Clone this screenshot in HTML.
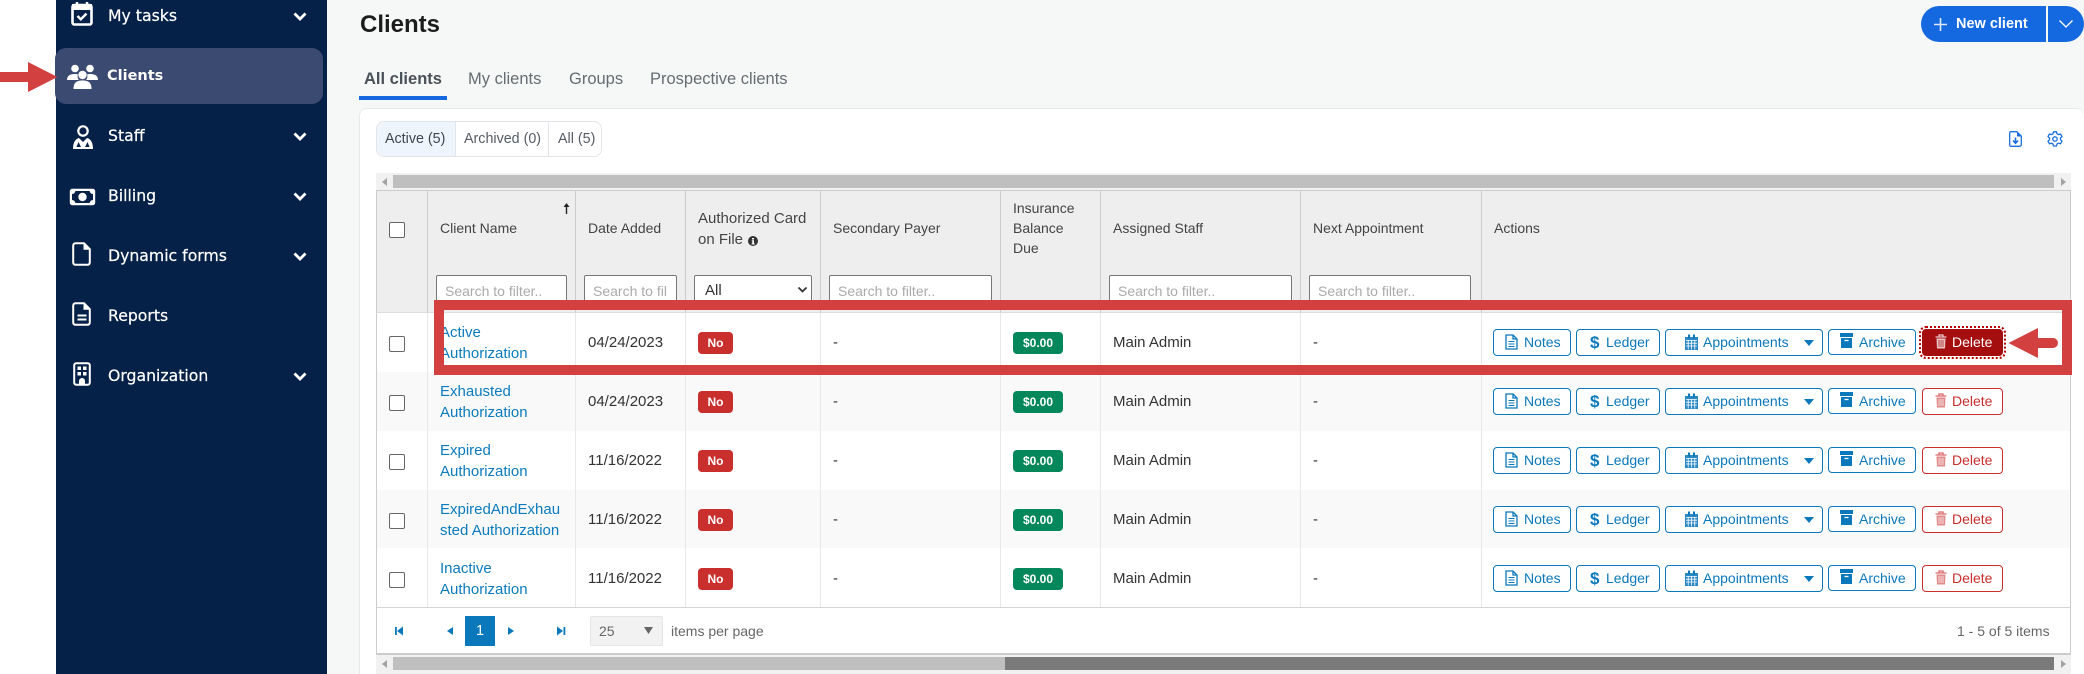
<!DOCTYPE html>
<html><head><meta charset="utf-8">
<style>
html,body{margin:0;padding:0}
*{box-sizing:border-box}
body{width:2084px;height:674px;position:relative;overflow:hidden;background:#fff;font-family:"Liberation Sans",Arial,sans-serif;color:#333}
.a{position:absolute}
.t{position:absolute;white-space:nowrap}
.nav{position:absolute;left:108px;color:#fff;font-family:"DejaVu Sans",sans-serif;font-size:15.7px;line-height:20px;white-space:nowrap;-webkit-text-stroke:.2px #fff}
svg{position:absolute;overflow:visible}
.cell{position:absolute;white-space:nowrap;font-size:15px;line-height:21px;color:#333}
.link{color:#0b7bbd}
.th{position:absolute;font-size:14px;line-height:21px;color:#444;white-space:nowrap}
.inp{position:absolute;top:275px;height:30px;background:#fff;border:1px solid #777;border-radius:2px;font-size:14px;line-height:18px;color:#aaa;padding:6px 0 0 8px;overflow:hidden;white-space:nowrap}
.vl{position:absolute;width:1px}
.row{position:absolute;left:377px;width:1693px;height:59px}
.btn{position:absolute;top:16px;height:27px;border:1px solid #0a78bb;border-radius:4px;background:#fff;color:#0a78bb;font-size:14px;line-height:25px;white-space:nowrap}
.btn span{position:absolute;top:0}
.del{border-color:#c92f2c;color:#c92f2c}
.no{position:absolute;left:321px;top:19px;width:35px;height:22px;background:#c92f2c;border-radius:4px;color:#fff;font-size:12px;font-weight:bold;text-align:center;line-height:22px}
.bal{position:absolute;left:636px;top:19px;width:50px;height:22px;background:#04875a;border-radius:4px;color:#fff;font-size:12px;font-weight:bold;text-align:center;line-height:22px}
</style></head>
<body>
<svg width="0" height="0" style="position:absolute">
<defs>
<symbol id="chev" viewBox="0 0 14 9"><path d="M1.5 1.5L7 7l5.5-5.5" fill="none" stroke="#fff" stroke-width="2.8"/></symbol>
<symbol id="note" viewBox="0 0 13 16"><path d="M1 1h7l4 4v10H1z M8 1v4h4" fill="none" stroke="#0a78bb" stroke-width="1.3"/><path d="M3.5 7.5h6M3.5 10h6M3.5 12.5h6" stroke="#0a78bb" stroke-width="1.1"/></symbol>
<symbol id="cal" viewBox="0 0 13 16"><path d="M0 3h13v13H0z" fill="#2a88c4"/><path d="M3 0.5h2v4H3zM8 .5h2v4H8z" fill="#0a78bb"/><path d="M1 6.5h11M1 9.2h11M1 12h11M3.2 6v9.5M6.5 6v9.5M9.8 6v9.5" stroke="#fff" stroke-width=".8"/></symbol>
<symbol id="box" viewBox="0 0 13 15"><path d="M0 0h13v4H0zM1 5h11v10H1z" fill="#0a78bb"/><path d="M4.5 7.5h4" stroke="#fff" stroke-width="1.3"/></symbol>
<symbol id="trash" viewBox="0 0 12 15"><path d="M.5 3h11M4 3V1h4v2" fill="none" stroke="#d9686a" stroke-width="1.3"/><path d="M1.5 4.5h9L10 14.5H2z" fill="#e08a8a"/><path d="M4 6v7M6 6v7M8 6v7" stroke="#fff" stroke-width=".7"/></symbol>
<symbol id="trashw" viewBox="0 0 12 15"><path d="M.5 3h11M4 3V1h4v2" fill="none" stroke="#e9c4c4" stroke-width="1.3"/><path d="M1.5 4.5h9L10 14.5H2z" fill="#e9c4c4"/><path d="M4 6v7M6 6v7M8 6v7" stroke="#a50e0e" stroke-width=".7"/></symbol>
<symbol id="caret" viewBox="0 0 10 6"><path d="M0 0h10L5 6z" fill="#0a78bb"/></symbol>
</defs>
</svg>

<!-- main bg -->
<div class="a" style="left:327px;top:0;width:1757px;height:674px;background:#f6f8f8"></div>
<!-- sidebar -->
<div class="a" style="left:56px;top:0;width:271px;height:674px;background:#062147"></div>
<div class="a" style="left:55px;top:48px;width:268px;height:56px;background:#3a4a70;border-radius:11px"></div>

<!-- sidebar icons -->
<svg style="left:71px;top:0" width="22" height="27" viewBox="0 0 22 27"><rect x="1.5" y="5" width="19" height="19.5" rx="2" fill="none" stroke="#fff" stroke-width="2.6"/><rect x="1" y="4" width="20" height="6" fill="#fff"/><path d="M6 2v4M16 2v4" stroke="#fff" stroke-width="2.4"/><path d="M6.5 16l3.3 3.3 5.7-5.7" fill="none" stroke="#fff" stroke-width="2.4"/></svg>
<svg style="left:67px;top:64px" width="31" height="26" viewBox="0 0 31 26"><g fill="#fff"><circle cx="8" cy="4.5" r="3.8"/><circle cx="23" cy="4.5" r="3.8"/><circle cx="15.5" cy="11" r="4.2"/><path d="M0 16c0-5 4-6 8-6 1 0 2 .1 3 .5-1 2.500 0 4.500 1 5.500z"/><path d="M31 16c0-5-4-6-8-6-1 0-2 .1-3 .5 1 2.500 0 4.500-1 5.500z"/><path d="M6.500 25c0-5 1.500-8.500 9-8.500s9 3.500 9 8.500z"/></g></svg>
<svg style="left:72px;top:125px" width="22" height="25" viewBox="0 0 22 25"><circle cx="11" cy="6" r="4.700" fill="none" stroke="#fff" stroke-width="2.200"/><path d="M1 24c0-6 2-10 6-11l4 4 4-4c4 1 6 5 6 11z" fill="#fff"/><path d="M4.500 22l2-5 2.500 5zM17.500 22l-2-5-2.500 5z" fill="#062147"/></svg>
<svg style="left:69px;top:188px" width="27" height="18" viewBox="0 0 27 18"><rect x=".8" y=".8" width="25.400" height="16.400" rx="2.500" fill="#fff"/><path d="M3 6q2.500 0 3.500-3h14q1 3 3.500 3v6q-2.500 0-3.500 3h-14Q5.500 12 3 12z" fill="#062147"/><circle cx="13.500" cy="9" r="4.200" fill="#fff"/></svg>
<svg style="left:73px;top:242px" width="18" height="24" viewBox="0 0 18 24"><path d="M2.500 1.200h8.500l5.800 6v13.300a2.300 2.300 0 0 1-2.300 2.300h-12a2.300 2.300 0 0 1-2.300-2.300V3.500a2.300 2.300 0 0 1 2.300-2.300z" fill="none" stroke="#fff" stroke-width="2"/><path d="M10.500 1l6.500 6.800h-6.500z" fill="#fff"/></svg>
<svg style="left:73px;top:302px" width="18" height="24" viewBox="0 0 18 24"><path d="M2.500 1.200h8.500l5.800 6v13.300a2.300 2.300 0 0 1-2.300 2.300h-12a2.300 2.300 0 0 1-2.300-2.300V3.500a2.300 2.300 0 0 1 2.300-2.300z" fill="none" stroke="#fff" stroke-width="2"/><path d="M10.500 1l6.500 6.800h-6.500z" fill="#fff"/><path d="M4.500 13.500h9M4.500 17.500h9" stroke="#fff" stroke-width="2"/></svg>
<svg style="left:73px;top:362px" width="18" height="24" viewBox="0 0 18 24"><rect x="1.200" y="1.200" width="15.600" height="21.600" rx="2" fill="none" stroke="#fff" stroke-width="2"/><path d="M4.500 4.500h3.500v3.500H4.500zM10 4.500h3.500v3.500H10zM4.500 10h3.500v3.500H4.500zM10 10h3.500v3.500H10z" fill="#fff"/><path d="M6 23v-4a3 3 0 0 1 6 0v4z" fill="#fff"/></svg>

<div class="nav" style="top:6px">My tasks</div>
<div class="nav" style="top:66px;font-weight:bold;font-size:14.500px;left:107px;-webkit-text-stroke:0">Clients</div>
<div class="nav" style="top:126px">Staff</div>
<div class="nav" style="top:186px">Billing</div>
<div class="nav" style="top:246px">Dynamic forms</div>
<div class="nav" style="top:306px">Reports</div>
<div class="nav" style="top:366px">Organization</div>

<svg style="left:293px;top:12px" width="14" height="9"><use href="#chev"/></svg>
<svg style="left:293px;top:132px" width="14" height="9"><use href="#chev"/></svg>
<svg style="left:293px;top:192px" width="14" height="9"><use href="#chev"/></svg>
<svg style="left:293px;top:252px" width="14" height="9"><use href="#chev"/></svg>
<svg style="left:293px;top:372px" width="14" height="9"><use href="#chev"/></svg>

<!-- heading -->
<div class="t" style="left:360px;top:11px;font-size:24px;line-height:28px;font-weight:bold;color:#1c1c1c">Clients</div>
<div class="a" style="left:1921px;top:6px;width:125px;height:36px;background:#1469e0;border-radius:18px 0 0 18px"></div>
<div class="a" style="left:2048px;top:6px;width:36px;height:36px;background:#1469e0;border-radius:0 18px 18px 0"></div>
<svg style="left:1934px;top:18px" width="13" height="13"><path d="M6.500 0v13M0 6.500h13" stroke="#dbe8fb" stroke-width="1.600"/></svg>
<div class="t" style="left:1956px;top:14px;font-size:14.500px;line-height:20px;font-weight:bold;color:#fff">New client</div>
<svg style="left:2059px;top:20px" width="14" height="8"><path d="M.5.500L7 7l6.500-6.500" fill="none" stroke="#fff" stroke-width="1.300"/></svg>

<!-- tabs -->
<div class="t" style="left:364px;top:69px;font-size:16.500px;line-height:20px;font-weight:bold;color:#4a5058">All clients</div>
<div class="t" style="left:468px;top:69px;font-size:16.500px;line-height:20px;color:#666c72">My clients</div>
<div class="t" style="left:569px;top:69px;font-size:16.500px;line-height:20px;color:#666c72">Groups</div>
<div class="t" style="left:650px;top:69px;font-size:16.500px;line-height:20px;color:#666c72">Prospective clients</div>
<div class="a" style="left:359px;top:96px;width:88px;height:4px;background:#1469e0"></div>

<!-- card -->
<div class="a" style="left:359px;top:108px;width:1725px;height:566px;background:#fff;border:1px solid #e8eaea;border-bottom:0;border-right:0;border-radius:8px 8px 0 0"></div>

<!-- segment -->
<div class="a" style="left:376px;top:121px;width:226px;height:36px;border:1px solid #e3e5e8;border-radius:8px;background:#fff;overflow:hidden">
<div class="a" style="left:0;top:0;width:79px;height:34px;background:#eff5fd;border-right:1px solid #e3e5e8"></div>
<div class="a" style="left:79px;top:0;width:93px;height:34px;border-right:1px solid #e3e5e8"></div>
</div>
<div class="t" style="left:385px;top:130px;font-size:14.300px;line-height:18px;color:#3e4650">Active (5)</div>
<div class="t" style="left:464px;top:130px;font-size:14.300px;line-height:18px;color:#555c64">Archived (0)</div>
<div class="t" style="left:558px;top:130px;font-size:14.300px;line-height:18px;color:#555c64">All (5)</div>

<!-- top right icons -->
<svg style="left:2009px;top:131px" width="13" height="16" viewBox="0 0 13 16"><path d="M1.800 .7h6l4.500 4.500v8.500a1.600 1.600 0 0 1-1.600 1.600H1.800a1.100 1.100 0 0 1-1.100-1.100V1.800A1.100 1.100 0 0 1 1.800.7z" fill="none" stroke="#1a6fe0" stroke-width="1.300"/><path d="M8 1v4.500h4" fill="#1a6fe0"/><path d="M6.500 6.500v5M4 9.500l2.500 2.800L9 9.500" fill="none" stroke="#1a6fe0" stroke-width="1.600"/></svg>
<svg style="left:2047px;top:131px" width="16" height="16" viewBox="0 0 16 16"><path d="M6.500.8h3l.5 2 1.500.8 2-.6 1.500 2.600-1.500 1.400v1.800l1.500 1.400-1.500 2.600-2-.6-1.500.8-.5 2h-3l-.5-2-1.500-.8-2 .6L1 10.200l1.500-1.400V7L1 5.600 2.500 3l2 .6L6 2.800z" fill="none" stroke="#1a6fe0" stroke-width="1.300" stroke-linejoin="round"/><circle cx="8" cy="8" r="2.200" fill="none" stroke="#1a6fe0" stroke-width="1.300"/></svg>

<!-- top scrollbar -->
<div class="a" style="left:376px;top:173px;width:1695px;height:17px;background:#f1f1f1"></div>
<div class="a" style="left:393px;top:175px;width:1661px;height:13px;background:#bfbfbf"></div>
<svg style="left:382px;top:178px" width="6" height="8"><path d="M5 0v8L0 4z" fill="#a3a3a3"/></svg>
<svg style="left:2061px;top:178px" width="6" height="8"><path d="M0 0v8l5-4z" fill="#a3a3a3"/></svg>

<!-- header -->
<div class="a" style="left:376px;top:190px;width:1695px;height:123px;background:#eee;border:1px solid #ccc;border-bottom:1px solid #ddd"></div>

<!-- table body -->
<div class="a" style="left:376px;top:313px;width:1695px;height:341px;background:#fff;border:1px solid #ccc;border-top:0"></div>
<div class="a" style="left:377px;top:607px;width:1693px;height:1px;background:#d4d4d4"></div>

<div class="row" style="top:313px;background:#fff"></div>
<div class="row" style="top:372px;background:#f9f9f9"></div>
<div class="row" style="top:431px;background:#fff"></div>
<div class="row" style="top:490px;background:#f9f9f9"></div>
<div class="row" style="top:548px;background:#fff"></div>

<!-- header dividers -->
<div class="vl" style="left:427px;top:191px;height:121px;background:#ccc"></div>
<div class="vl" style="left:575px;top:191px;height:121px;background:#ccc"></div>
<div class="vl" style="left:685px;top:191px;height:121px;background:#ccc"></div>
<div class="vl" style="left:820px;top:191px;height:121px;background:#ccc"></div>
<div class="vl" style="left:1000px;top:191px;height:121px;background:#ccc"></div>
<div class="vl" style="left:1100px;top:191px;height:121px;background:#ccc"></div>
<div class="vl" style="left:1300px;top:191px;height:121px;background:#ccc"></div>
<div class="vl" style="left:1481px;top:191px;height:121px;background:#ccc"></div>
<!-- body dividers -->
<div class="vl" style="left:427px;top:313px;height:294px;background:#e8e8e8"></div>
<div class="vl" style="left:575px;top:313px;height:294px;background:#e8e8e8"></div>
<div class="vl" style="left:685px;top:313px;height:294px;background:#e8e8e8"></div>
<div class="vl" style="left:820px;top:313px;height:294px;background:#e8e8e8"></div>
<div class="vl" style="left:1000px;top:313px;height:294px;background:#e8e8e8"></div>
<div class="vl" style="left:1100px;top:313px;height:294px;background:#e8e8e8"></div>
<div class="vl" style="left:1300px;top:313px;height:294px;background:#e8e8e8"></div>
<div class="vl" style="left:1481px;top:313px;height:294px;background:#e8e8e8"></div>

<!-- header text -->
<div class="a" style="left:389px;top:222px;width:16px;height:16px;border:1px solid #666;border-radius:2px;background:#fff"></div>
<div class="th" style="left:440px;top:218px">Client Name</div>
<svg style="left:563px;top:203px" width="7" height="11"><path d="M3.500 0L6.500 4H4.200V11H2.800V4H.5z" fill="#222"/></svg>
<div class="th" style="left:588px;top:218px">Date Added</div>
<div class="th" style="left:698px;top:208px;font-size:15px">Authorized Card</div>
<div class="th" style="left:698px;top:229px;font-size:15px">on File</div>
<svg style="left:748px;top:236px" width="10" height="10"><circle cx="5" cy="5" r="5" fill="#333"/><path d="M4 2h2v1.500H4zM3.800 4.300H6v3.200h.8V8.500H3.500V7.500h.8V5.300h-.5z" fill="#fff"/></svg>
<div class="th" style="left:833px;top:218px">Secondary Payer</div>
<div class="th" style="left:1013px;top:198px">Insurance</div>
<div class="th" style="left:1013px;top:218px">Balance</div>
<div class="th" style="left:1013px;top:238px">Due</div>
<div class="th" style="left:1113px;top:218px">Assigned Staff</div>
<div class="th" style="left:1313px;top:218px">Next Appointment</div>
<div class="th" style="left:1494px;top:218px">Actions</div>

<!-- filter inputs -->
<div class="inp" style="left:436px;width:131px">Search to filter..</div>
<div class="inp" style="left:584px;width:93px">Search to fil</div>
<div class="inp" style="left:694px;width:118px;color:#333;padding-left:10px;font-size:15px">All<svg style="left:103px;top:11px" width="9" height="6"><path d="M.5.500L4.500 4.500 8.500.5" fill="none" stroke="#333" stroke-width="1.800"/></svg></div>
<div class="inp" style="left:829px;width:163px">Search to filter..</div>
<div class="inp" style="left:1109px;width:183px">Search to filter..</div>
<div class="inp" style="left:1309px;width:162px">Search to filter..</div>

<!-- ROW 1 -->
<div class="row" style="top:313px;background:none">
<div class="a" style="left:12px;top:23px;width:16px;height:16px;border:1px solid #666;border-radius:2px;background:#fff"></div>
<div class="cell link" style="left:63px;top:9px">Active<br>Authorization</div>
<div class="cell" style="left:211px;top:19px">04/24/2023</div>
<div class="no">No</div>
<div class="cell" style="left:456px;top:19px">-</div>
<div class="bal">$0.00</div>
<div class="cell" style="left:736px;top:19px">Main Admin</div>
<div class="cell" style="left:936px;top:19px">-</div>
<div class="btn" style="left:1116px;width:78px"><svg style="left:11px;top:4px" width="13" height="16"><use href="#note"/></svg><span style="left:30px">Notes</span></div>
<div class="btn" style="left:1199px;width:84px"><span style="left:13px;font-weight:bold;font-size:17px">$</span><span style="left:29px">Ledger</span></div>
<div class="btn" style="left:1288px;width:158px"><svg style="left:19px;top:4px" width="13" height="16"><use href="#cal"/></svg><span style="left:37px">Appointments</span><svg style="left:138px;top:10px" width="10" height="6"><use href="#caret"/></svg></div>
<div class="btn" style="left:1451px;width:88px;height:26px"><svg style="left:11px;top:3px" width="13" height="15"><use href="#box"/></svg><span style="left:30px">Archive</span></div>
<div class="btn" style="left:1545px;width:81px;background:#a50e0e;border-color:#a50e0e;color:#fff;outline:2px dotted #b00;outline-offset:1px"><svg style="left:12px;top:4px" width="12" height="15"><use href="#trashw"/></svg><span style="left:29px">Delete</span></div>
</div>
<!-- ROW 2 -->
<div class="row" style="top:372px;background:none">
<div class="a" style="left:12px;top:23px;width:16px;height:16px;border:1px solid #666;border-radius:2px;background:#fff"></div>
<div class="cell link" style="left:63px;top:9px">Exhausted<br>Authorization</div>
<div class="cell" style="left:211px;top:19px">04/24/2023</div>
<div class="no">No</div>
<div class="cell" style="left:456px;top:19px">-</div>
<div class="bal">$0.00</div>
<div class="cell" style="left:736px;top:19px">Main Admin</div>
<div class="cell" style="left:936px;top:19px">-</div>
<div class="btn" style="left:1116px;width:78px"><svg style="left:11px;top:4px" width="13" height="16"><use href="#note"/></svg><span style="left:30px">Notes</span></div>
<div class="btn" style="left:1199px;width:84px"><span style="left:13px;font-weight:bold;font-size:17px">$</span><span style="left:29px">Ledger</span></div>
<div class="btn" style="left:1288px;width:158px"><svg style="left:19px;top:4px" width="13" height="16"><use href="#cal"/></svg><span style="left:37px">Appointments</span><svg style="left:138px;top:10px" width="10" height="6"><use href="#caret"/></svg></div>
<div class="btn" style="left:1451px;width:88px;height:26px"><svg style="left:11px;top:3px" width="13" height="15"><use href="#box"/></svg><span style="left:30px">Archive</span></div>
<div class="btn del" style="left:1545px;width:81px"><svg style="left:12px;top:4px" width="12" height="15"><use href="#trash"/></svg><span style="left:29px">Delete</span></div>
</div>
<!-- ROW 3 -->
<div class="row" style="top:431px;background:none">
<div class="a" style="left:12px;top:23px;width:16px;height:16px;border:1px solid #666;border-radius:2px;background:#fff"></div>
<div class="cell link" style="left:63px;top:9px">Expired<br>Authorization</div>
<div class="cell" style="left:211px;top:19px">11/16/2022</div>
<div class="no">No</div>
<div class="cell" style="left:456px;top:19px">-</div>
<div class="bal">$0.00</div>
<div class="cell" style="left:736px;top:19px">Main Admin</div>
<div class="cell" style="left:936px;top:19px">-</div>
<div class="btn" style="left:1116px;width:78px"><svg style="left:11px;top:4px" width="13" height="16"><use href="#note"/></svg><span style="left:30px">Notes</span></div>
<div class="btn" style="left:1199px;width:84px"><span style="left:13px;font-weight:bold;font-size:17px">$</span><span style="left:29px">Ledger</span></div>
<div class="btn" style="left:1288px;width:158px"><svg style="left:19px;top:4px" width="13" height="16"><use href="#cal"/></svg><span style="left:37px">Appointments</span><svg style="left:138px;top:10px" width="10" height="6"><use href="#caret"/></svg></div>
<div class="btn" style="left:1451px;width:88px;height:26px"><svg style="left:11px;top:3px" width="13" height="15"><use href="#box"/></svg><span style="left:30px">Archive</span></div>
<div class="btn del" style="left:1545px;width:81px"><svg style="left:12px;top:4px" width="12" height="15"><use href="#trash"/></svg><span style="left:29px">Delete</span></div>
</div>
<!-- ROW 4 -->
<div class="row" style="top:490px;background:none">
<div class="a" style="left:12px;top:23px;width:16px;height:16px;border:1px solid #666;border-radius:2px;background:#fff"></div>
<div class="cell link" style="left:63px;top:9px">ExpiredAndExhau<br>sted Authorization</div>
<div class="cell" style="left:211px;top:19px">11/16/2022</div>
<div class="no">No</div>
<div class="cell" style="left:456px;top:19px">-</div>
<div class="bal">$0.00</div>
<div class="cell" style="left:736px;top:19px">Main Admin</div>
<div class="cell" style="left:936px;top:19px">-</div>
<div class="btn" style="left:1116px;width:78px"><svg style="left:11px;top:4px" width="13" height="16"><use href="#note"/></svg><span style="left:30px">Notes</span></div>
<div class="btn" style="left:1199px;width:84px"><span style="left:13px;font-weight:bold;font-size:17px">$</span><span style="left:29px">Ledger</span></div>
<div class="btn" style="left:1288px;width:158px"><svg style="left:19px;top:4px" width="13" height="16"><use href="#cal"/></svg><span style="left:37px">Appointments</span><svg style="left:138px;top:10px" width="10" height="6"><use href="#caret"/></svg></div>
<div class="btn" style="left:1451px;width:88px;height:26px"><svg style="left:11px;top:3px" width="13" height="15"><use href="#box"/></svg><span style="left:30px">Archive</span></div>
<div class="btn del" style="left:1545px;width:81px"><svg style="left:12px;top:4px" width="12" height="15"><use href="#trash"/></svg><span style="left:29px">Delete</span></div>
</div>
<!-- ROW 5 -->
<div class="row" style="top:549px;background:none;height:58px">
<div class="a" style="left:12px;top:23px;width:16px;height:16px;border:1px solid #666;border-radius:2px;background:#fff"></div>
<div class="cell link" style="left:63px;top:9px">Inactive<br>Authorization</div>
<div class="cell" style="left:211px;top:19px">11/16/2022</div>
<div class="no">No</div>
<div class="cell" style="left:456px;top:19px">-</div>
<div class="bal">$0.00</div>
<div class="cell" style="left:736px;top:19px">Main Admin</div>
<div class="cell" style="left:936px;top:19px">-</div>
<div class="btn" style="left:1116px;width:78px"><svg style="left:11px;top:4px" width="13" height="16"><use href="#note"/></svg><span style="left:30px">Notes</span></div>
<div class="btn" style="left:1199px;width:84px"><span style="left:13px;font-weight:bold;font-size:17px">$</span><span style="left:29px">Ledger</span></div>
<div class="btn" style="left:1288px;width:158px"><svg style="left:19px;top:4px" width="13" height="16"><use href="#cal"/></svg><span style="left:37px">Appointments</span><svg style="left:138px;top:10px" width="10" height="6"><use href="#caret"/></svg></div>
<div class="btn" style="left:1451px;width:88px;height:26px"><svg style="left:11px;top:3px" width="13" height="15"><use href="#box"/></svg><span style="left:30px">Archive</span></div>
<div class="btn del" style="left:1545px;width:81px"><svg style="left:12px;top:4px" width="12" height="15"><use href="#trash"/></svg><span style="left:29px">Delete</span></div>
</div>

<!-- pager -->
<svg style="left:395px;top:626px" width="9" height="10"><path d="M0 1h1.800v8H0zM8 .5v9L2 5z" fill="#0a78bb"/></svg>
<svg style="left:447px;top:627px" width="6" height="8"><path d="M6 0v8L0 4z" fill="#0a78bb"/></svg>
<div class="a" style="left:465px;top:616px;width:30px;height:30px;background:#0a78bb;color:#fff;font-size:14.500px;text-align:center;line-height:30px">1</div>
<svg style="left:508px;top:627px" width="6" height="8"><path d="M0 0v8l6-4z" fill="#0a78bb"/></svg>
<svg style="left:557px;top:626px" width="9" height="10"><path d="M0 .5v9L6 5zM6.500 1h1.800v8H6.500z" fill="#0a78bb"/></svg>
<div class="a" style="left:590px;top:616px;width:73px;height:30px;background:#f2f2f2;border:1px solid #e6e6e6;border-radius:2px;font-size:14px;line-height:28px;color:#666;padding-left:8px">25</div>
<svg style="left:644px;top:627px" width="9" height="7"><path d="M0 0h9L4.500 7z" fill="#666"/></svg>
<div class="t" style="left:671px;top:622px;font-size:14px;line-height:18px;color:#666">items per page</div>
<div class="t" style="left:1957px;top:622px;font-size:14px;line-height:18px;color:#666">1 - 5 of 5 items</div>

<!-- bottom scrollbar -->
<div class="a" style="left:376px;top:654px;width:1695px;height:20px;background:#f1f1f1;border-top:1px solid #ccc"></div>
<div class="a" style="left:393px;top:657px;width:612px;height:13px;background:#bfbfbf"></div>
<div class="a" style="left:1005px;top:657px;width:1049px;height:13px;background:#7a7a7a"></div>
<svg style="left:382px;top:660px" width="6" height="8"><path d="M5 0v8L0 4z" fill="#a3a3a3"/></svg>
<svg style="left:2061px;top:660px" width="6" height="8"><path d="M0 0v8l5-4z" fill="#a3a3a3"/></svg>

<!-- annotations -->
<div class="a" style="left:434px;top:300px;width:1638px;height:75px;border:10px solid #d34040"></div>
<svg style="left:0;top:62px" width="58" height="30"><path d="M0 10h28V0l29.500 15L28 30V20H0z" fill="#d34040"/></svg>
<svg style="left:2008px;top:327px" width="51" height="32"><path d="M.5 16L30 1v10h15a5 5 0 0 1 0 10H30v10z" fill="#d34040"/></svg>
</body></html>
